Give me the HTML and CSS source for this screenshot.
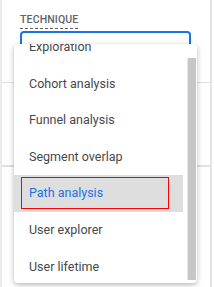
FILE: index.html
```html
<!DOCTYPE html>
<html>
<head>
<meta charset="utf-8">
<link rel="stylesheet" href="styles.css">
</head>
<body>
<div class="panel">
  <div class="section top">
    <div class="label">TECHNIQUE</div>
    <div class="input"></div>
  </div>
  <div class="section mid"></div>
  <div class="section rest"></div>

  <div class="menu">
    <ul class="list">
      <li class="item">Exploration</li>
      <li class="item">Cohort analysis</li>
      <li class="item">Funnel analysis</li>
      <li class="item">Segment overlap</li>
      <li class="item active"><span class="focus"></span>Path analysis</li>
      <li class="item">User explorer</li>
      <li class="item">User lifetime</li>
    </ul>
    <div class="scrollbar"></div>
  </div>
</div>
</body>
</html>
```
FILE: styles.css
```css
html, body {
  margin: 0;
  padding: 0;
  background: #ffffff;
  font-family: Roboto, "Liberation Sans", sans-serif;
}
.panel {
  position: relative;
  width: 208px;
  height: 287px;
  border-left: 2px solid #e8eaed;
  border-right: 2px solid #e3e4e8;
  overflow: hidden;
}
.section {
  border-bottom: 1px solid #e0e0e0;
}
.top {
  height: 83px;
  padding: 0 0 0 18px;
  box-sizing: border-box;
}
.mid {
  height: 82px;
}
.label {
  display: inline-block;
  margin-top: 13px;
  font-size: 10.5px;
  font-weight: 500;
  color: #5f6368;
  letter-spacing: 0.15px;
  line-height: 13px;
  padding-bottom: 2px;
  border-bottom: 1px dashed #5f6368;
}
.input {
  margin-top: 2px;
  width: 171px;
  height: 30px;
  box-sizing: border-box;
  border: 2px solid #1a73e8;
  border-radius: 4px;
}
.menu {
  position: absolute;
  left: 12px;
  top: 44px;
  width: 183px;
  height: 239px;
  background: #fff;
  border-radius: 4px;
  box-shadow: 0 2px 4px rgba(0,0,0,0.2), 0 1px 8px rgba(0,0,0,0.1);
  overflow: hidden;
}
.list {
  list-style: none;
  margin: -15px 0 0 0;
  padding: 0;
  width: 169px;
}
.item {
  position: relative;
  height: 36.6px;
  line-height: 36.6px;
  padding-left: 15px;
  font-size: 12.5px;
  color: #45484c;
}
.item.active {
  background: #dedede;
  color: #1a73e8;
}
.focus {
  position: absolute;
  left: 7px;
  top: 2px;
  width: 148px;
  height: 32px;
  box-sizing: border-box;
  border: 1px solid #ff0000;
}
.scrollbar {
  position: absolute;
  right: 1px;
  top: 14px;
  width: 8px;
  height: 222px;
  background: #c6c6c6;
  border-left: 1px solid #e6e6e6;
}
```
